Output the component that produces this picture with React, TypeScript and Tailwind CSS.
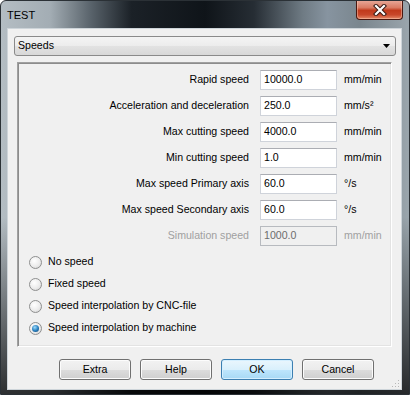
import React from "react";

const rows = [
  { label: "Rapid speed", value: "10000.0", unit: "mm/min" },
  { label: "Acceleration and deceleration", value: "250.0", unit: "mm/s²" },
  { label: "Max cutting speed", value: "4000.0", unit: "mm/min" },
  { label: "Min cutting speed", value: "1.0", unit: "mm/min" },
  { label: "Max speed Primary axis", value: "60.0", unit: "°/s" },
  { label: "Max speed Secondary axis", value: "60.0", unit: "°/s" },
  { label: "Simulation speed", value: "1000.0", unit: "mm/min", disabled: true },
];

const radios = [
  { label: "No speed" },
  { label: "Fixed speed" },
  { label: "Speed interpolation by CNC-file" },
  { label: "Speed interpolation by machine", checked: true },
];

const Radio = ({ checked }: { checked?: boolean }) => (
  <span className="w-[13px] h-[13px] rounded-full border border-[#8e8f8f] bg-[radial-gradient(circle_at_40%_35%,#ffffff_0%,#ececec_55%,#cfcfcf_100%)] flex items-center justify-center shrink-0">
    {checked && (
      <span className="w-[7px] h-[7px] rounded-full bg-[radial-gradient(circle_at_40%_35%,#9fdcfb_0%,#2d83c2_50%,#0c3d68_100%)]" />
    )}
  </span>
);

const Btn = ({ children, primary }: { children: React.ReactNode; primary?: boolean }) => (
  <button
    className={
      primary
        ? "w-[72px] h-[21px] rounded-[3px] border border-[#3c7fb1] bg-[linear-gradient(to_bottom,#eaf6fd_0%,#d9f0fc_50%,#bee6fd_51%,#a7d9f5_100%)] shadow-[inset_0_0_0_1px_#d4efff] text-black"
        : "w-[72px] h-[21px] rounded-[3px] border border-[#707070] bg-[linear-gradient(to_bottom,#f2f2f2_0%,#ebebeb_50%,#dddddd_51%,#cfcfcf_100%)] shadow-[inset_0_0_0_1px_#fcfcfc] text-black"
    }
  >
    {children}
  </button>
);

export default function App() {
  return (
    <div className="w-[410px] h-[395px] flex flex-col rounded-t-[6px] border border-[#2b3136] bg-[linear-gradient(to_bottom,transparent_55%,rgba(0,0,0,0.75)_100%),linear-gradient(to_right,#b4bdc3_0%,#a3adb4_12%,#59636b_22%,#1b2127_32%,#0f1419_50%,#262d34_62%,#6f7b84_74%,#8794a0_80%,#7a868e_88%,#9aa5ac_100%)] font-['Liberation_Sans',Arial,sans-serif] text-[10.6px] text-black overflow-hidden">
      {/* title bar */}
      <div className="h-[27px] flex items-start justify-between shrink-0">
        <span className="pl-[6px] pt-[8px] text-[11px] leading-[12px] text-black">TEST</span>
        <div className="mr-[6px] -mt-px w-[47px] h-[20px] rounded-b-[4px] border border-t-0 border-[#4a1810] bg-[linear-gradient(to_bottom,#e9ab9c_0%,#d97b63_40%,#c13a1c_55%,#c8472a_78%,#e48968_100%)] shadow-[inset_0_0_0_1px_rgba(255,210,190,0.45)] flex items-center justify-center">
          <svg width="14" height="12" viewBox="0 0 14 12">
            <path d="M3 2 L11 10 M11 2 L3 10" stroke="#3a1a14" strokeWidth="4.2" strokeLinecap="square" />
            <path d="M3 2 L11 10 M11 2 L3 10" stroke="#ffffff" strokeWidth="2.2" strokeLinecap="square" />
          </svg>
        </div>
      </div>

      {/* client */}
      <div className="relative flex-1 ml-[6px] mr-[7px] mb-[4px] border border-[#cdd4d9] bg-[#f0f0f0] flex flex-col">
        <div className="mt-[7px] ml-[6px] mr-[5px] h-[20px] rounded-[3px] border border-[#8a8a8a] bg-[linear-gradient(to_bottom,#f4f4f4_0%,#ececec_50%,#e2e2e2_51%,#d8d8d8_100%)] flex items-center justify-between pl-[3px] pr-[5px]">
          <span>Speeds</span>
          <svg width="7" height="4" viewBox="0 0 7 4">
            <path d="M0 0 H7 L3.5 4 Z" fill="#000" />
          </svg>
        </div>

        <div className="mt-[6px] mx-[9px] h-[285px] border-t border-l border-[#a0a0a0] border-b border-r border-b-white border-r-white shadow-[inset_1px_1px_0_#8c8c8c,inset_-1px_-1px_0_#e3e3e3] flex flex-col">
          <div className="pt-[7px] flex flex-col gap-[6px]">
            {rows.map((r) => (
              <div key={r.label} className="flex items-center h-[20px]">
                <span
                  className={
                    r.disabled
                      ? "w-[231px] text-right text-[#a0a0a0]"
                      : "w-[231px] text-right"
                  }
                >
                  {r.label}
                </span>
                <span
                  className={
                    r.disabled
                      ? "ml-[11px] w-[77px] h-[20px] border border-[#b7babf] bg-[#f0f0f0] pl-[3px] flex items-center text-[#6d6d6d]"
                      : "ml-[11px] w-[77px] h-[20px] border border-[#cfd3da] border-t-[#abadb3] bg-white pl-[3px] flex items-center"
                  }
                >
                  {r.value}
                </span>
                <span className={r.disabled ? "ml-[7px] text-[#a0a0a0]" : "ml-[7px]"}>
                  {r.unit}
                </span>
              </div>
            ))}
          </div>

          <div className="mt-[5px] flex flex-col">
            {radios.map((r) => (
              <div key={r.label} className="h-[22px] flex items-center pl-[11px] gap-[6px]">
                <Radio checked={r.checked} />
                <span>{r.label}</span>
              </div>
            ))}
          </div>
        </div>

        <div className="mt-[12px] ml-[51px] flex gap-[9px]">
          <Btn>Extra</Btn>
          <Btn>Help</Btn>
          <Btn primary>OK</Btn>
          <Btn>Cancel</Btn>
        </div>

        <svg className="absolute right-[1px] bottom-[1px]" width="8" height="8" viewBox="0 0 8 8">
          <rect x="6" y="0" width="1" height="1" fill="#b8b8b8" />
          <rect x="6" y="3" width="1" height="1" fill="#b8b8b8" />
          <rect x="3" y="3" width="1" height="1" fill="#b8b8b8" />
          <rect x="6" y="6" width="1" height="1" fill="#b8b8b8" />
          <rect x="3" y="6" width="1" height="1" fill="#b8b8b8" />
          <rect x="0" y="6" width="1" height="1" fill="#b8b8b8" />
        </svg>
      </div>
    </div>
  );
}
